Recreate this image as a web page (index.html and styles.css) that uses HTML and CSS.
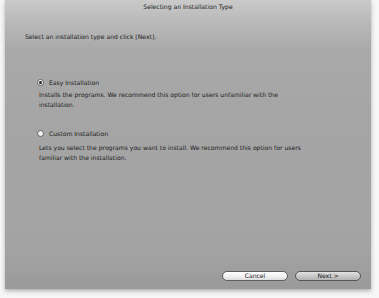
FILE: index.html
```html
<!DOCTYPE html>
<html lang="en">
<head>
  <meta charset="UTF-8">
  <title>Selecting an Installation Type</title>
  <link rel="stylesheet" href="styles.css">
</head>
<body>
  <div class="window">
    <header class="title-bar">Selecting an Installation Type</header>
    <section class="content">
      <p class="intro">Select an installation type and click [Next].</p>
      <div class="option option-easy">
        <label class="radio-row"><span class="radio checked"></span>Easy Installation</label>
        <p class="desc">Installs the programs. We recommend this option for users unfamiliar with the<br>installation.</p>
      </div>
      <div class="option option-custom">
        <label class="radio-row"><span class="radio"></span>Custom Installation</label>
        <p class="desc">Lets you select the programs you want to install. We recommend this option for users<br>familiar with the installation.</p>
      </div>
    </section>
    <footer class="buttons">
      <button type="button" class="btn btn-cancel">Cancel</button>
      <button type="button" class="btn btn-next">Next &gt;</button>
    </footer>
  </div>
</body>
</html>
```

FILE: styles.css
```css
* {
  box-sizing: border-box;
}
html {
  font-family: 'DejaVu Sans', 'Liberation Sans', sans-serif;
}
body {
  margin: 0;
  background: #f6f6f6;
  width: 379px;
  height: 298px;
  overflow: hidden;
}
.window {
  margin-left: 5px;
  width: 366px;
  height: 289px;
  display: flex;
  flex-direction: column;
  color: #1a1a1a;
  font-size: 6.1px;
  background: linear-gradient(#cacaca 0px, #bababa 20px, #a9a9a9 50px, #a5a5a5 120px, #a3a3a3 250px, #9a9a9a 289px);
  box-shadow: 0 2px 4px rgba(0, 0, 0, 0.3);
}
.title-bar {
  height: 15px;
  line-height: 14px;
  text-align: center;
}
.content {
  flex: 1;
  padding-left: 20px;
}
.intro {
  margin: 17px 0 0;
  line-height: 10px;
}
.option {
  padding-left: 14px;
}
.option-easy {
  margin-top: 35px;
}
.option-custom {
  margin-top: 18px;
}
.radio-row {
  display: flex;
  align-items: center;
  height: 10px;
}
.radio {
  width: 7px;
  height: 7px;
  border-radius: 50%;
  margin-left: -2px;
  margin-right: 5px;
  background: radial-gradient(circle at 50% 35%, #ffffff, #dcdcdc);
  border: 1px solid #6a6a6a;
  display: inline-flex;
  align-items: center;
  justify-content: center;
}
.radio.checked::after {
  content: "";
  width: 3px;
  height: 3px;
  border-radius: 50%;
  background: #222;
}
.desc {
  margin: 3px 0 0;
  line-height: 10px;
}
.option-custom .desc {
  margin-top: 5px;
}
.buttons {
  height: 18px;
  display: flex;
  justify-content: flex-end;
  gap: 7px;
  padding-right: 10px;
  align-items: flex-start;
}
.btn {
  font: inherit;
  width: 66px;
  height: 10px;
  line-height: 8px;
  padding: 0;
  border-radius: 5px;
  color: #1a1a1a;
  border: 1px solid #5e5e5e;
}
.btn-cancel {
  background: linear-gradient(#ffffff, #f0f0f0 60%, #dcdcdc);
}
.btn-next {
  background: linear-gradient(#e2e2e2, #c4c4c4 60%, #b4b4b4);
  border-color: #555;
}
```
